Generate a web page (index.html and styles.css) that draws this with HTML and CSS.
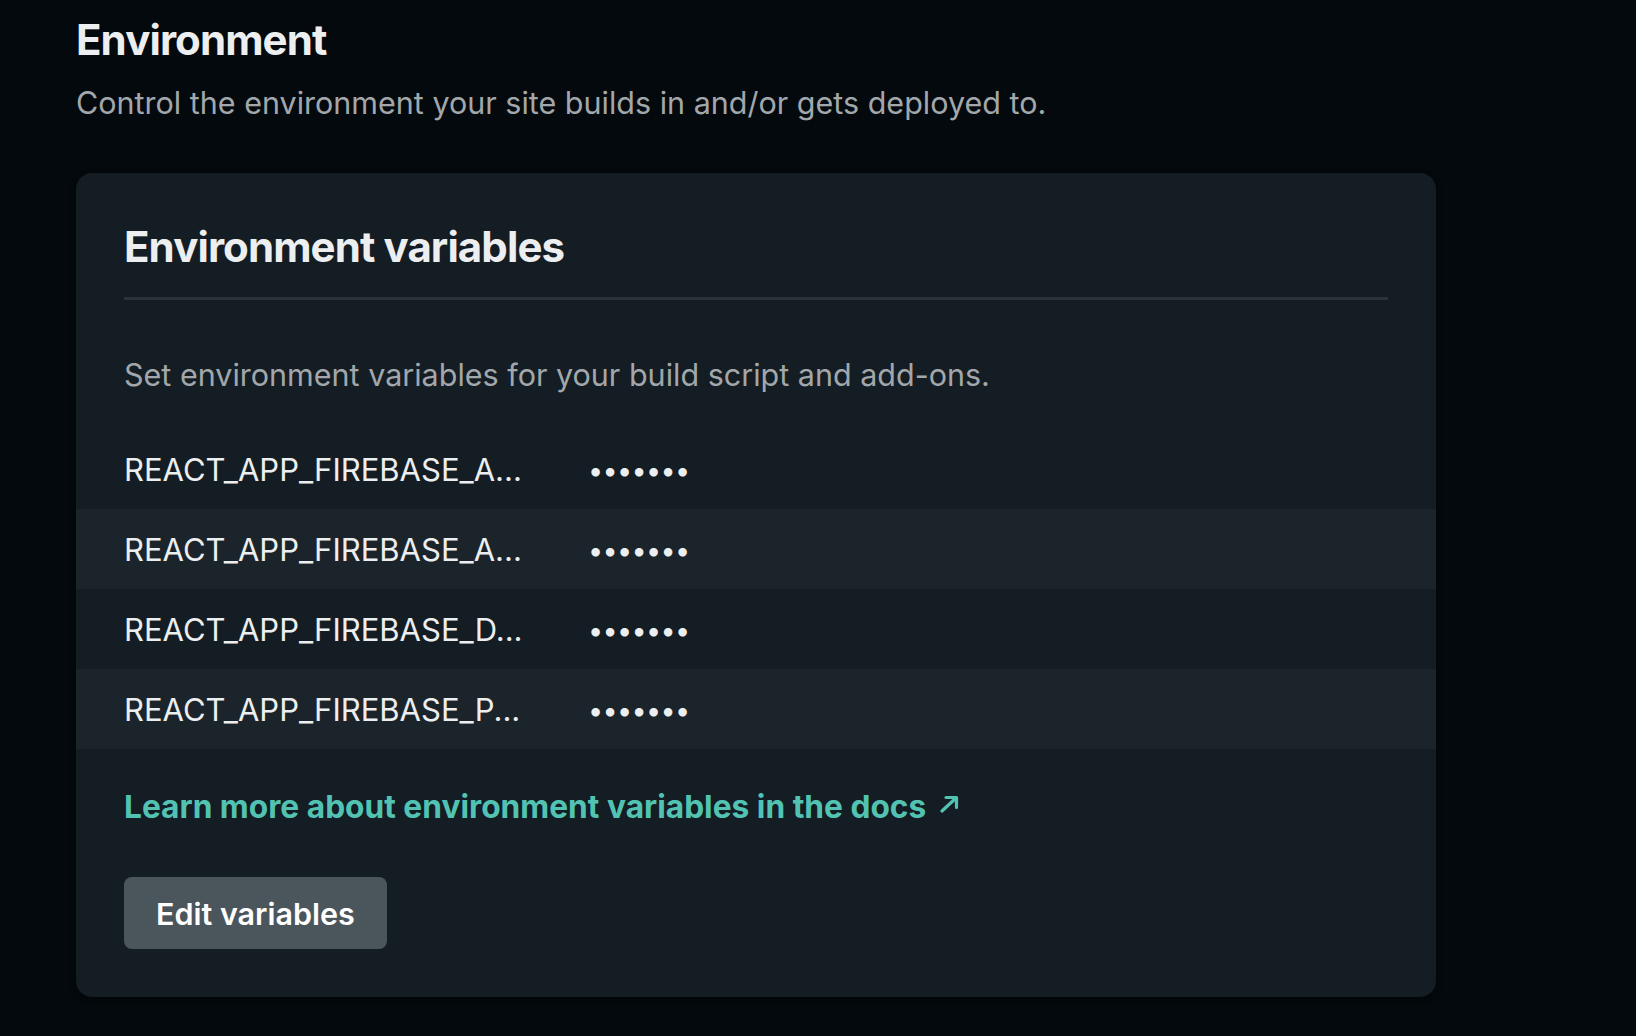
FILE: index.html
```html
<!DOCTYPE html>
<html>
  <head>
    <title>Environment</title>
    <meta charset="UTF-8" />
    <link rel="stylesheet" href="styles.css">
  </head>

  <body>
    <main class="page">

      <!-- Section header -->
      <header class="section-head">
        <h1>Environment</h1>
        <p>Control the environment your site builds in and/or gets deployed to.</p>
      </header>

      <!-- Environment variables card -->
      <section class="card">
        <h2 class="card-title">Environment variables</h2>
        <p class="card-desc">Set environment variables for your build script and add-ons.</p>

        <ul class="env-list">
          <li class="env-row">
            <span class="env-key" title="REACT_APP_FIREBASE_API_KEY">REACT_APP_FIREBASE_A...</span>
            <span class="env-value">•••••••</span>
          </li>
          <li class="env-row">
            <span class="env-key" title="REACT_APP_FIREBASE_AUTH_DOMAIN">REACT_APP_FIREBASE_A...</span>
            <span class="env-value">•••••••</span>
          </li>
          <li class="env-row">
            <span class="env-key" title="REACT_APP_FIREBASE_DATABASE_URL">REACT_APP_FIREBASE_D...</span>
            <span class="env-value">•••••••</span>
          </li>
          <li class="env-row">
            <span class="env-key" title="REACT_APP_FIREBASE_PROJECT_ID">REACT_APP_FIREBASE_P...</span>
            <span class="env-value">•••••••</span>
          </li>
        </ul>

        <a class="docs-link" href="#">Learn more about environment variables in the docs<svg class="ext-icon" width="21" height="18" viewBox="0 0 21 18"><path d="M3 16 L17 3 M7 2.5 H17.5 V12.5" fill="none" stroke="currentColor" stroke-width="3.2" stroke-linecap="round" stroke-linejoin="round"/></svg></a>

        <div class="actions">
          <button class="btn">Edit variables</button>
        </div>
      </section>

    </main>
  </body>
</html>
```

FILE: styles.css
```css
  html, body {
    margin: 0;
    background-color: #03090c;
    font-family: Inter, "Noto Sans", "Liberation Sans", sans-serif;
    color: #eceef0;
  }

  .page {
    padding: 15px 76px 40px;
    width: 1360px;
  }

  /* Section header */
  .section-head h1 {
    margin: 0;
    font-size: 42px;
    line-height: 50px;
    font-weight: 700;
    letter-spacing: -0.9px;
  }
  .section-head p {
    margin: 15px 0 0;
    font-size: 30.5px;
    line-height: 45px;
    color: #a2a7ab;
  }

  /* Card */
  .card {
    margin-top: 48px;
    padding: 49px 48px 48px;
    background-color: #141d23;
    border-radius: 16px;
    box-shadow: 0 2px 6px rgba(0, 0, 0, 0.4);
  }

  .card-title {
    margin: 0;
    padding-bottom: 25px;
    border-bottom: 3px solid #2a3339;
    font-size: 42px;
    line-height: 50px;
    font-weight: 700;
    letter-spacing: -0.9px;
  }

  .card-desc {
    margin: 52px 0 0;
    font-size: 30.5px;
    line-height: 45px;
    color: #a2a7ab;
  }

  /* Variable rows */
  .env-list {
    list-style: none;
    margin: 32px -48px 0;
    padding: 0;
  }
  .env-row {
    display: flex;
    align-items: center;
    height: 80px;
    padding: 0 48px;
    font-size: 31px;
  }
  .env-row:nth-child(even) {
    background-color: #1b242a;
  }
  .env-key {
    width: 464px;
    flex-shrink: 0;
    white-space: nowrap;
  }
  .env-value {
    font-size: 27px;
    letter-spacing: -0.7px;
    margin-top: 2px;
  }

  /* Docs link */
  .docs-link {
    display: inline-flex;
    align-items: center;
    margin-top: 35px;
    font-size: 31.7px;
    line-height: 45px;
    font-weight: 700;
    color: #52c3b3;
    text-decoration: none;
  }
  .ext-icon {
    margin-left: 13px;
    margin-top: -5px;
  }

  /* Button */
  .actions {
    margin-top: 48px;
  }
  .btn {
    height: 72px;
    padding: 0 32px;
    border: none;
    border-radius: 8px;
    background-color: #4b565c;
    color: #ffffff;
    font-family: inherit;
    font-size: 30.5px;
    font-weight: 600;
    cursor: pointer;
  }
  .btn:hover {
    background-color: #58646a;
  }
```
